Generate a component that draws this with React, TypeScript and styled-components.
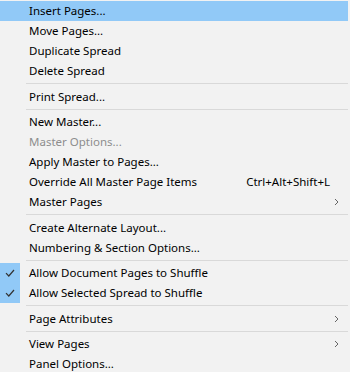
import React from "react";
import styled, { createGlobalStyle } from "styled-components";

const Global = createGlobalStyle`
  html, body { margin: 0; padding: 0; background: #f2f2f2; }
  body { font-family: "Noto Sans", "Open Sans", sans-serif; }
`;

const Menu = styled.div`
  width: 350px;
  height: 372px;
  box-sizing: border-box;
  padding: 1px 2px 0 0;
  background: #f2f2f2;
  display: flex;
  flex-direction: column;
  overflow: hidden;
`;

const Row = styled.div<{ $active?: boolean; $disabled?: boolean }>`
  height: 20px;
  flex: 0 0 20px;
  display: grid;
  grid-template-columns: 20px 9px 1fr auto 18px;
  align-items: center;
  background: ${(p) => (p.$active ? "#91c9f7" : "transparent")};
  color: ${(p) => (p.$disabled ? "#8d8d8d" : "#000")};
  font-size: 11.5px;
  line-height: 20px;
  white-space: nowrap;
`;

const Check = styled.div<{ $on?: boolean }>`
  height: 20px;
  display: flex;
  align-items: center;
  justify-content: center;
  background: ${(p) => (p.$on ? "#91c9f7" : "transparent")};
`;

const Label = styled.span`
  grid-column: 3;
`;

const Shortcut = styled.span`
  grid-column: 4;
`;

const Arrow = styled.div`
  grid-column: 5;
  display: flex;
  align-items: center;
  justify-content: flex-start;
  padding-left: 4px;
`;

const Sep = styled.div`
  flex: 0 0 5.5px;
  height: 5.5px;
  display: flex;
  align-items: center;
  padding-left: 26px;
  &::after {
    content: "";
    flex: 1;
    height: 1px;
    background: #d9d9d9;
  }
`;

type Item = {
  label?: string;
  sep?: boolean;
  active?: boolean;
  disabled?: boolean;
  checked?: boolean;
  shortcut?: string;
  sub?: boolean;
};

const items: Item[] = [
  { label: "Insert Pages...", active: true },
  { label: "Move Pages..." },
  { label: "Duplicate Spread" },
  { label: "Delete Spread" },
  { sep: true },
  { label: "Print Spread..." },
  { sep: true },
  { label: "New Master..." },
  { label: "Master Options...", disabled: true },
  { label: "Apply Master to Pages..." },
  { label: "Override All Master Page Items", shortcut: "Ctrl+Alt+Shift+L" },
  { label: "Master Pages", sub: true },
  { sep: true },
  { label: "Create Alternate Layout..." },
  { label: "Numbering & Section Options..." },
  { sep: true },
  { label: "Allow Document Pages to Shuffle", checked: true },
  { label: "Allow Selected Spread to Shuffle", checked: true },
  { sep: true },
  { label: "Page Attributes", sub: true },
  { sep: true },
  { label: "View Pages", sub: true },
  { label: "Panel Options..." },
];

const CheckIcon = () => (
  <svg width="10" height="8" viewBox="0 0 10 8">
    <path d="M1 4.2 L3.8 7 L9 1" fill="none" stroke="#333" strokeWidth="1.2" />
  </svg>
);

const ChevronIcon = () => (
  <svg width="5" height="8" viewBox="0 0 5 8">
    <path d="M1 1 L4 4 L1 7" fill="none" stroke="#666" strokeWidth="1" />
  </svg>
);

export default function App() {
  return (
    <>
      <Global />
      <Menu>
        {items.map((it, i) =>
          it.sep ? (
            <Sep key={i} />
          ) : (
            <Row key={i} $active={it.active} $disabled={it.disabled}>
              <Check $on={it.checked}>{it.checked && <CheckIcon />}</Check>
              <Label>{it.label}</Label>
              {it.shortcut && <Shortcut>{it.shortcut}</Shortcut>}
              {it.sub && (
                <Arrow>
                  <ChevronIcon />
                </Arrow>
              )}
            </Row>
          )
        )}
      </Menu>
    </>
  );
}
